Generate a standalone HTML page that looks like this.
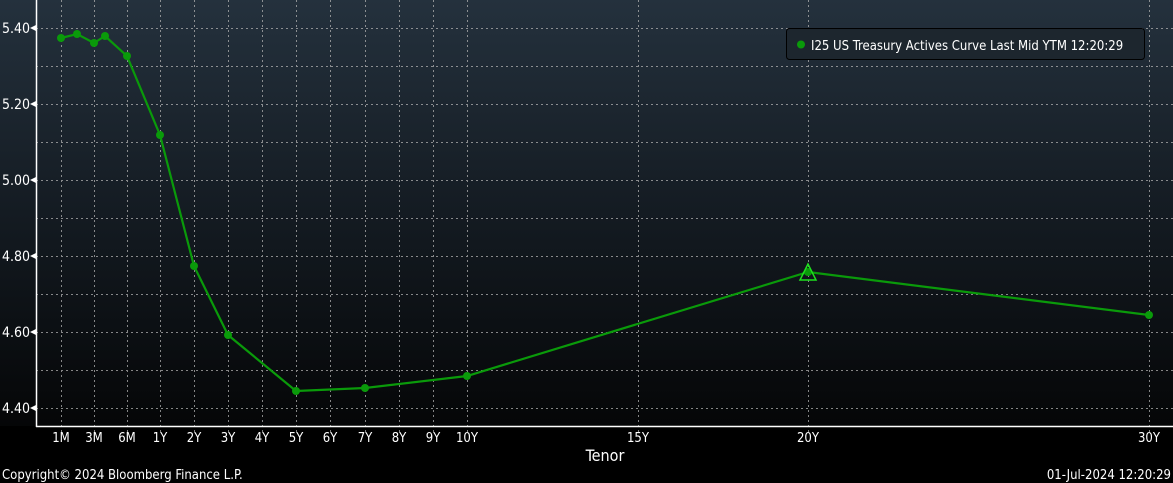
<!DOCTYPE html>
<html><head><style>
html,body{margin:0;padding:0;background:#000;}
svg{display:block;}
text{font-family:"DejaVu Sans Condensed","Liberation Sans",sans-serif;fill:#fff;}
</style></head><body>
<svg width="1173" height="483" viewBox="0 0 1173 483" xmlns="http://www.w3.org/2000/svg">
<defs>
<linearGradient id="bg" x1="0" y1="0" x2="0" y2="1">
<stop offset="0" stop-color="#24313d"/>
<stop offset="0.5" stop-color="#141b22"/>
<stop offset="1" stop-color="#050607"/>
</linearGradient>
</defs>
<rect x="0" y="0" width="1173" height="426" fill="url(#bg)"/>
<g stroke="#b0b0b0" stroke-width="1" stroke-dasharray="2,3" opacity="0.75">
<line x1="36" y1="28.5" x2="1173" y2="28.5"/>
<line x1="36" y1="66.5" x2="1173" y2="66.5"/>
<line x1="36" y1="104.5" x2="1173" y2="104.5"/>
<line x1="36" y1="142.5" x2="1173" y2="142.5"/>
<line x1="36" y1="180.5" x2="1173" y2="180.5"/>
<line x1="36" y1="218.5" x2="1173" y2="218.5"/>
<line x1="36" y1="256.5" x2="1173" y2="256.5"/>
<line x1="36" y1="294.5" x2="1173" y2="294.5"/>
<line x1="36" y1="332.5" x2="1173" y2="332.5"/>
<line x1="36" y1="370.5" x2="1173" y2="370.5"/>
<line x1="36" y1="408.5" x2="1173" y2="408.5"/>
<line x1="61.5" y1="0" x2="61.5" y2="432"/>
<line x1="94.5" y1="0" x2="94.5" y2="432"/>
<line x1="127.5" y1="0" x2="127.5" y2="432"/>
<line x1="160.5" y1="0" x2="160.5" y2="432"/>
<line x1="194.5" y1="0" x2="194.5" y2="432"/>
<line x1="228.5" y1="0" x2="228.5" y2="432"/>
<line x1="262.5" y1="0" x2="262.5" y2="432"/>
<line x1="296.5" y1="0" x2="296.5" y2="432"/>
<line x1="330.5" y1="0" x2="330.5" y2="432"/>
<line x1="365.5" y1="0" x2="365.5" y2="432"/>
<line x1="399.5" y1="0" x2="399.5" y2="432"/>
<line x1="433.5" y1="0" x2="433.5" y2="432"/>
<line x1="467.5" y1="0" x2="467.5" y2="432"/>
<line x1="638.5" y1="0" x2="638.5" y2="432"/>
<line x1="808.5" y1="0" x2="808.5" y2="432"/>
<line x1="1149.5" y1="0" x2="1149.5" y2="432"/>
</g>
<line x1="36.5" y1="0" x2="36.5" y2="427" stroke="#fff" stroke-width="1.5"/>
<line x1="36" y1="426.5" x2="1173" y2="426.5" stroke="#fff" stroke-width="1.5"/>
<g fill="#fff">
<polygon points="30,28 36,25 36,31"/>
<polygon points="30,104 36,101 36,107"/>
<polygon points="30,180 36,177 36,183"/>
<polygon points="30,256 36,253 36,259"/>
<polygon points="30,332 36,329 36,335"/>
<polygon points="30,408 36,405 36,411"/>
</g>
<g font-size="14" text-anchor="end">
<text x="30" y="33">5.40</text>
<text x="30" y="109">5.20</text>
<text x="30" y="185">5.00</text>
<text x="30" y="261">4.80</text>
<text x="30" y="337">4.60</text>
<text x="30" y="413">4.40</text>
</g>
<g font-size="13" text-anchor="middle">
<text x="61" y="442">1M</text><text x="94" y="442">3M</text><text x="127" y="442">6M</text>
<text x="160" y="442">1Y</text><text x="194" y="442">2Y</text><text x="228" y="442">3Y</text>
<text x="262" y="442">4Y</text><text x="296" y="442">5Y</text><text x="330" y="442">6Y</text>
<text x="365" y="442">7Y</text><text x="399" y="442">8Y</text><text x="433" y="442">9Y</text>
<text x="467" y="442">10Y</text><text x="638" y="442">15Y</text><text x="808" y="442">20Y</text>
<text x="1149" y="442">30Y</text>
</g>
<text x="605" y="461" font-size="16" text-anchor="middle">Tenor</text>
<text x="2" y="479" font-size="13">Copyright© 2024 Bloomberg Finance L.P.</text>
<text x="1171" y="479" font-size="13" text-anchor="end">01-Jul-2024 12:20:29</text>
<polyline fill="none" stroke="#0a9a0a" stroke-width="2.2" points="61,38 77,34 94,43 105,36 127,56 160,135 194,266 228,335 296,391 365,388 467,376 808,272 1149,315"/>
<g fill="#0a9a0a">
<circle cx="61" cy="38" r="4"/><circle cx="77" cy="34" r="4"/><circle cx="94" cy="43" r="4"/>
<circle cx="105" cy="36" r="4"/><circle cx="127" cy="56" r="4"/><circle cx="160" cy="135" r="4"/>
<circle cx="194" cy="266" r="4"/><circle cx="228" cy="335" r="4"/><circle cx="296" cy="391" r="4"/>
<circle cx="365" cy="388" r="4"/><circle cx="467" cy="376" r="4"/><circle cx="808" cy="272" r="4"/>
<circle cx="1149" cy="315" r="4"/>
</g>
<polygon points="808,264 800,280 816,280" fill="none" stroke="#1ee01e" stroke-width="1.5"/>
<rect x="786.5" y="28.5" width="358" height="31" rx="3" fill="#1d262e" stroke="#000" stroke-width="1"/>
<circle cx="801" cy="44.5" r="4" fill="#0a9a0a"/>
<text x="811" y="50" font-size="13">I25 US Treasury Actives Curve Last Mid YTM 12:20:29</text>
</svg>
</body></html>
